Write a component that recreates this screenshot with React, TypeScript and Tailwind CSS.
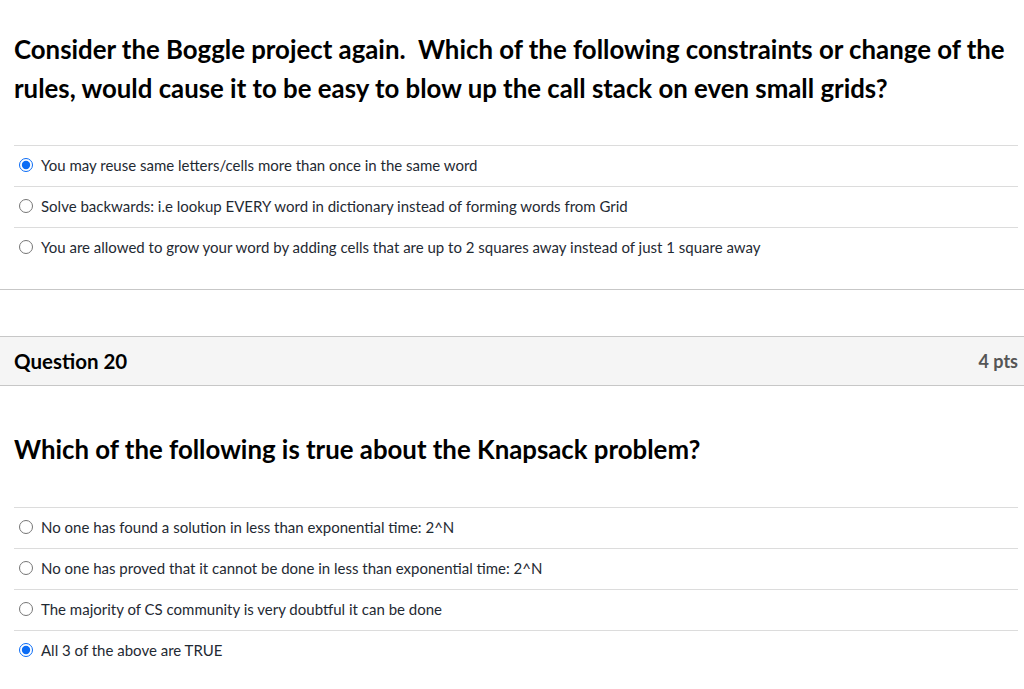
import React from "react";

const q1 = [
  { t: "You may reuse same letters/cells more than once in the same word", c: true },
  { t: "Solve backwards: i.e lookup EVERY word in dictionary instead of forming words from Grid", c: false },
  { t: "You are allowed to grow your word by adding cells that are up to 2 squares away instead of just 1 square away", c: false },
];
const q2 = [
  { t: "No one has found a solution in less than exponential time: 2^N", c: false },
  { t: "No one has proved that it cannot be done in less than exponential time: 2^N", c: false },
  { t: "The majority of CS community is very doubtful it can be done", c: false },
  { t: "All 3 of the above are TRUE", c: true },
];

function Radio({ checked }: { checked: boolean }) {
  return (
    <input
      type="radio"
      checked={checked}
      readOnly
      className="m-0 w-[14px] h-[14px] accent-[#0b6cf5] shrink-0"
    />
  );
}

function Options({ items }: { items: { t: string; c: boolean }[] }) {
  return (
    <div className="mx-[14px] mr-[6px]">
      {items.map((o, i) => (
        <div key={i} className="flex items-center h-[41px] border-t border-[#dcdcdc] gap-[8px] pl-[5px] pb-[2px] text-[15px] text-[#1f2a33]">
          <Radio checked={o.c} />
          <span>{o.t}</span>
        </div>
      ))}
    </div>
  );
}

export default function App() {
  return (
    <div className="w-[1024px] h-[689px] bg-white overflow-hidden text-black" style={{ fontFamily: "Lato, 'Noto Sans', sans-serif" }}>
      <div className="pt-[30px] pl-[14px] pr-[4px] text-[25.8px] font-bold leading-[39px] text-black">
        Consider the Boggle project again.&nbsp; Which of the following constraints or change of the rules, would cause it to be easy to blow up the call stack on even small grids?
      </div>
      <div className="mt-[37px]">
        <Options items={q1} />
      </div>
      <div className="mt-[21px] border-t border-[#c7c7c7]" />
      <div className="mt-[46px] h-[50px] bg-[#f5f5f5] border-t border-b border-[#c7c7c7] flex items-center justify-between px-[14px] pr-[6px]">
        <span className="text-[20.5px] font-bold text-black">Question 20</span>
        <span className="text-[18px] font-bold text-[#555]">4 pts</span>
      </div>
      <div className="pt-[44px] pl-[14px] pr-[4px] text-[25.8px] font-bold leading-[39px]">
        Which of the following is true about the Knapsack problem?
      </div>
      <div className="mt-[38px]">
        <Options items={q2} />
      </div>
    </div>
  );
}
